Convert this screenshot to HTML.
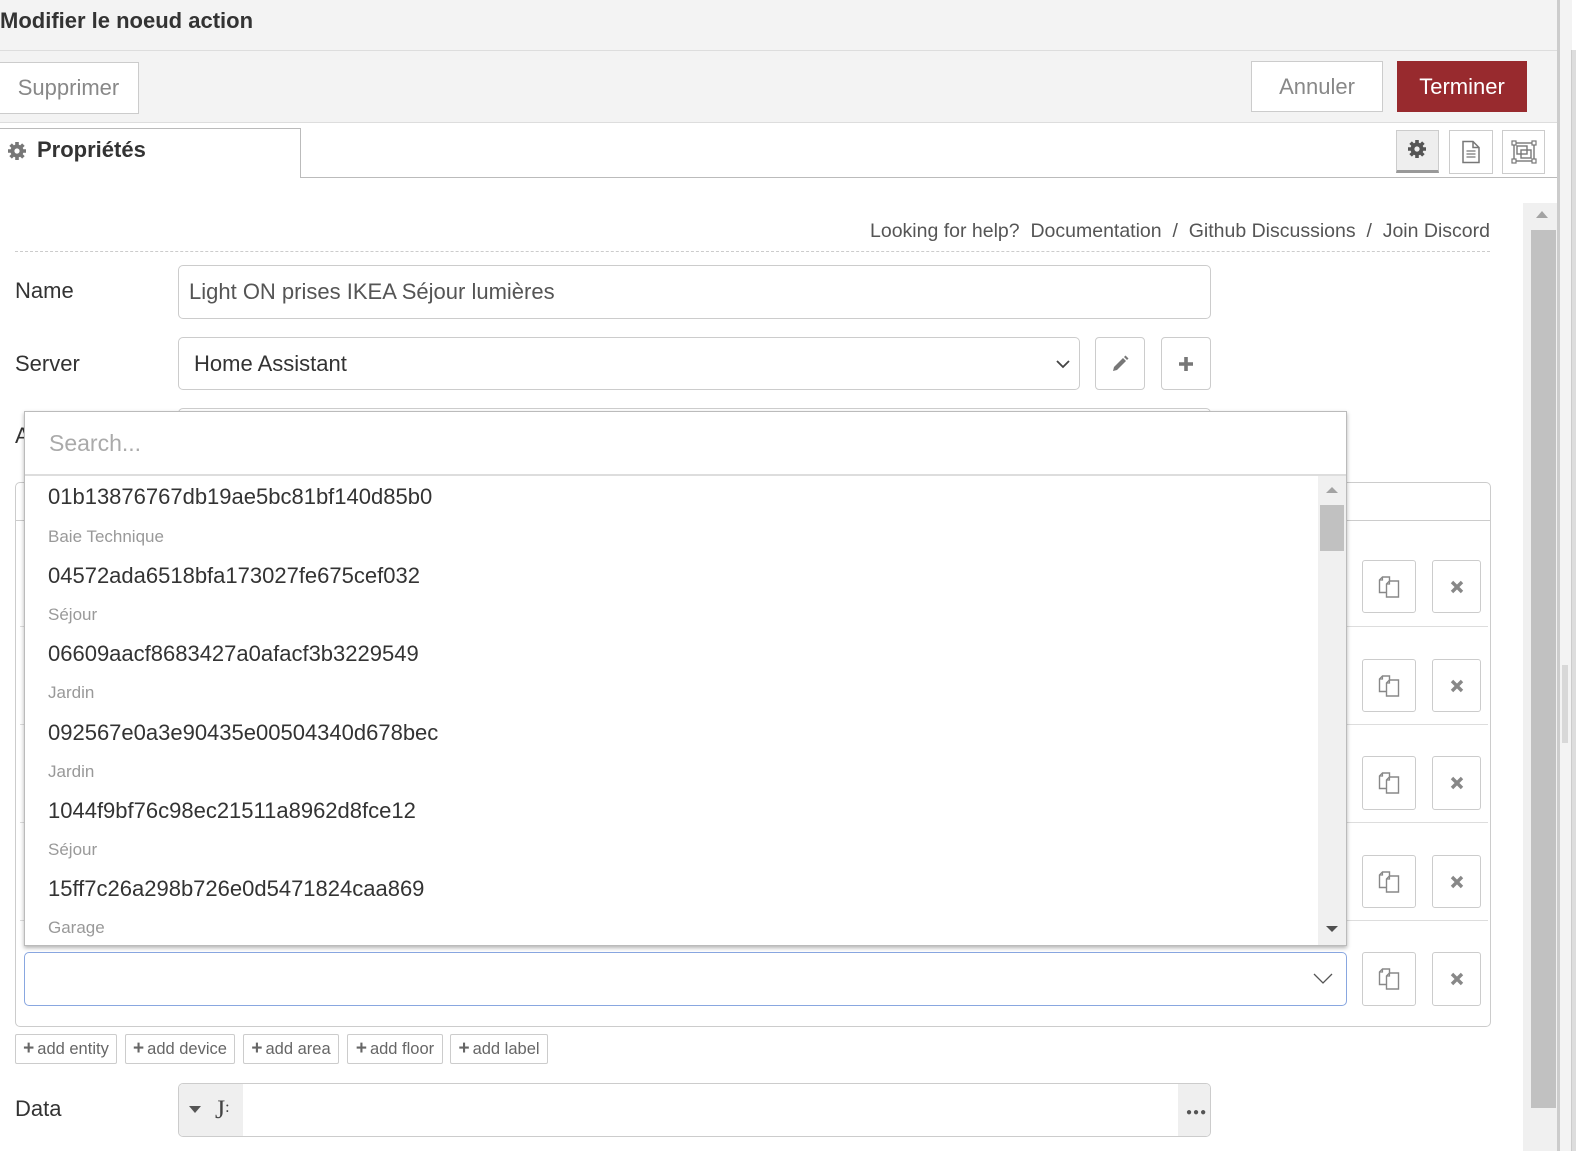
<!DOCTYPE html>
<html style="overflow:hidden;width:1576px;height:1151px"><head><meta charset="utf-8"><style>
*{box-sizing:border-box;margin:0;padding:0}
html,body{overflow:hidden}
body{width:1576px;height:1151px;background:#fff;font-family:"Liberation Sans",sans-serif;color:#333;position:relative}
#w{position:absolute;left:0;top:0;width:1576px;height:1151px;overflow:hidden}
.a{position:absolute;white-space:nowrap}
.btn{position:absolute;background:#fff;border:1px solid #ccc;border-radius:3px;display:flex;align-items:center;justify-content:center;white-space:nowrap}
.inp{position:absolute;border:1px solid #ccc;border-radius:5px;background:#fff}
.lbl{position:absolute;font-size:22px;color:#333}
.id{position:absolute;left:48px;font-size:22px;color:#333}
.sub{position:absolute;left:48px;font-size:17px;color:#999}
.add{position:absolute;top:1034px;height:30px;border:1px solid #ccc;border-radius:2px;font-size:16.5px;color:#666;display:flex;align-items:center;justify-content:center;background:#fff;white-space:nowrap}
.add b{font-size:19px;color:#666;margin-right:3px;font-weight:bold}
</style></head><body><div id="w">
<div class="a" style="left:0;top:0;width:1558px;height:123px;background:#f3f3f3;border-bottom:1px solid #ddd"></div>
<div class="a" style="left:0;top:50px;width:1558px;height:1px;background:#ddd"></div>
<div class="a" style="left:0;top:8px;font-size:22px;font-weight:bold;color:#333">Modifier le noeud action</div>
<div class="btn" style="left:-2px;top:62px;width:141px;height:52px;border-radius:0;font-size:22px;color:#888">Supprimer</div>
<div class="btn" style="left:1251px;top:61px;width:132px;height:51px;border-radius:0;font-size:22px;color:#888">Annuler</div>
<div class="btn" style="left:1397px;top:61px;width:130px;height:51px;border-radius:0;background:#982a2e;border-color:#982a2e;font-size:22px;color:#fff">Terminer</div>
<div class="a" style="left:1557px;top:0;width:3px;height:1151px;background:#ccc"></div>
<div class="a" style="left:1560px;top:0;width:12px;height:1151px;background:#f3f3f3"></div>
<div class="a" style="left:1571px;top:50px;width:1px;height:1101px;background:#ccc"></div>
<div class="a" style="left:1572px;top:50px;width:4px;height:1101px;background:#ddd"></div>
<div class="a" style="left:1562px;top:665px;width:6px;height:78px;background:#d8d8d8"></div>
<div class="a" style="left:0;top:177px;width:1557px;height:1px;background:#bbb"></div>
<div class="a" style="left:-1px;top:128px;width:302px;height:50px;background:#fff;border:1px solid #bbb;border-bottom:none"></div>
<svg class="a" style="left:7px;top:141px" width="20" height="20" viewBox="0 0 20 20"><g fill="#777"><circle cx="10" cy="10" r="6.5"/><g stroke="#777" stroke-width="3.6"><line x1="10" y1="1" x2="10" y2="19"/><line x1="1" y1="10" x2="19" y2="10"/><line x1="3.6" y1="3.6" x2="16.4" y2="16.4"/><line x1="16.4" y1="3.6" x2="3.6" y2="16.4"/></g></g><circle cx="10" cy="10" r="2.6" fill="#fff"/></svg>
<div class="a" style="left:37px;top:137px;font-size:22px;font-weight:bold;color:#333">Propriétés</div>
<div class="a" style="left:1396px;top:130px;width:43px;height:43px;background:#eee;border:1px solid #ccc;border-bottom:3px solid #999"></div>
<svg class="a" style="left:1407px;top:139px" width="20" height="20" viewBox="0 0 20 20"><g fill="#555"><circle cx="10" cy="10" r="6.5"/><g stroke="#555" stroke-width="3.6"><line x1="10" y1="1" x2="10" y2="19"/><line x1="1" y1="10" x2="19" y2="10"/><line x1="3.6" y1="3.6" x2="16.4" y2="16.4"/><line x1="16.4" y1="3.6" x2="3.6" y2="16.4"/></g></g><circle cx="10" cy="10" r="2.6" fill="#eee"/></svg>
<div class="btn" style="left:1449px;top:130px;width:44px;height:44px;border-radius:0"><svg width="22" height="24" viewBox="0 0 22 24"><path d="M3 1.5h10l6 6v15H3z M13 1.5v6h6" fill="none" stroke="#777" stroke-width="1.5"/><path d="M6.5 11h9M6.5 14h9M6.5 17h9" stroke="#777" stroke-width="1.3"/></svg></div>
<div class="btn" style="left:1502px;top:130px;width:43px;height:44px;border-radius:0"><svg width="26" height="24" viewBox="0 0 26 24"><rect x="3" y="3" width="20" height="18" fill="none" stroke="#777" stroke-width="1.4"/><rect x="6" y="6" width="10" height="8" fill="none" stroke="#777" stroke-width="1.4"/><rect x="10" y="10" width="10" height="8" fill="none" stroke="#777" stroke-width="1.4"/><g fill="#fff" stroke="#777" stroke-width="1.2"><rect x="1" y="1" width="4" height="4"/><rect x="21" y="1" width="4" height="4"/><rect x="1" y="19" width="4" height="4"/><rect x="21" y="19" width="4" height="4"/></g></svg></div>
<div class="a" style="left:1523px;top:203px;width:34px;height:948px;background:#f0f0f0"></div>
<div class="a" style="left:1531px;top:230px;width:25px;height:878px;background:#c1c1c1"></div>
<div class="a" style="left:1536px;top:211px;width:0;height:0;border-left:6px solid transparent;border-right:6px solid transparent;border-bottom:7px solid #a3a3a3"></div>
<div class="a" style="right:86px;top:220px;font-size:19.5px;color:#555">Looking for help?&nbsp; Documentation&nbsp; /&nbsp; Github Discussions&nbsp; /&nbsp; Join Discord</div>
<div class="a" style="left:15px;top:251px;width:1475px;border-top:1px dashed #ccc"></div>
<div class="lbl" style="left:15px;top:278px">Name</div>
<div class="inp" style="left:178px;top:265px;width:1033px;height:54px"><span class="a" style="left:10px;top:13px;font-size:22px;color:#555">Light ON prises IKEA Séjour lumières</span></div>
<div class="lbl" style="left:15px;top:351px">Server</div>
<div class="inp" style="left:178px;top:337px;width:902px;height:53px"><span class="a" style="left:15px;top:13px;font-size:22px;color:#333">Home Assistant</span><svg class="a" style="left:876px;top:20px" width="16" height="12" viewBox="0 0 16 12"><path d="M2 3l6 6 6-6" fill="none" stroke="#444" stroke-width="1.8"/></svg></div>
<div class="btn" style="left:1095px;top:337px;width:50px;height:53px;border-radius:4px"><svg width="20" height="20" viewBox="0 0 20 20"><path d="M3 17l1-4 9-9 3 3-9 9z" fill="#777"/><path d="M14 3l1.5-1.5 3 3L17 6z" fill="#777"/></svg></div>
<div class="btn" style="left:1161px;top:337px;width:50px;height:53px;border-radius:4px"><svg width="18" height="18" viewBox="0 0 18 18"><path d="M9 2v14M2 9h14" stroke="#777" stroke-width="3.6"/></svg></div>
<div class="lbl" style="left:15px;top:423px">A</div>
<div class="inp" style="left:178px;top:408px;width:1033px;height:54px"></div>
<div class="a" style="left:15px;top:482px;width:1476px;height:545px;border:1px solid #ccc;border-radius:5px;background:#fff"></div>
<div class="a" style="left:16px;top:520px;width:1474px;height:1px;background:#ccc"></div>
<div class="a" style="left:20px;top:626px;width:1468px;height:1px;background:#ddd"></div>
<div class="a" style="left:20px;top:724px;width:1468px;height:1px;background:#ddd"></div>
<div class="a" style="left:20px;top:822px;width:1468px;height:1px;background:#ddd"></div>
<div class="a" style="left:20px;top:920px;width:1468px;height:1px;background:#ddd"></div>
<div class="btn" style="left:1362px;top:560px;width:54px;height:53px"><svg width="22" height="22" viewBox="0 0 22 22"><path d="M1.5 4L4.5 1H11.5V16.5H1.5z" fill="#fff" stroke="#888" stroke-width="1.4"/><path d="M1.5 4H4.5V1" fill="none" stroke="#888" stroke-width="1.2"/><path d="M8.5 8L11.5 5H20.5V21H8.5z" fill="#fff" stroke="#888" stroke-width="1.4"/><path d="M8.5 8H11.5V5" fill="none" stroke="#888" stroke-width="1.2"/></svg></div>
<div class="btn" style="left:1432px;top:560px;width:49px;height:53px"><svg width="14" height="14" viewBox="0 0 14 14"><path d="M2 2l10 10M12 2L2 12" stroke="#888" stroke-width="3.4"/></svg></div>
<div class="btn" style="left:1362px;top:659px;width:54px;height:53px"><svg width="22" height="22" viewBox="0 0 22 22"><path d="M1.5 4L4.5 1H11.5V16.5H1.5z" fill="#fff" stroke="#888" stroke-width="1.4"/><path d="M1.5 4H4.5V1" fill="none" stroke="#888" stroke-width="1.2"/><path d="M8.5 8L11.5 5H20.5V21H8.5z" fill="#fff" stroke="#888" stroke-width="1.4"/><path d="M8.5 8H11.5V5" fill="none" stroke="#888" stroke-width="1.2"/></svg></div>
<div class="btn" style="left:1432px;top:659px;width:49px;height:53px"><svg width="14" height="14" viewBox="0 0 14 14"><path d="M2 2l10 10M12 2L2 12" stroke="#888" stroke-width="3.4"/></svg></div>
<div class="btn" style="left:1362px;top:756px;width:54px;height:54px"><svg width="22" height="22" viewBox="0 0 22 22"><path d="M1.5 4L4.5 1H11.5V16.5H1.5z" fill="#fff" stroke="#888" stroke-width="1.4"/><path d="M1.5 4H4.5V1" fill="none" stroke="#888" stroke-width="1.2"/><path d="M8.5 8L11.5 5H20.5V21H8.5z" fill="#fff" stroke="#888" stroke-width="1.4"/><path d="M8.5 8H11.5V5" fill="none" stroke="#888" stroke-width="1.2"/></svg></div>
<div class="btn" style="left:1432px;top:756px;width:49px;height:54px"><svg width="14" height="14" viewBox="0 0 14 14"><path d="M2 2l10 10M12 2L2 12" stroke="#888" stroke-width="3.4"/></svg></div>
<div class="btn" style="left:1362px;top:855px;width:54px;height:53px"><svg width="22" height="22" viewBox="0 0 22 22"><path d="M1.5 4L4.5 1H11.5V16.5H1.5z" fill="#fff" stroke="#888" stroke-width="1.4"/><path d="M1.5 4H4.5V1" fill="none" stroke="#888" stroke-width="1.2"/><path d="M8.5 8L11.5 5H20.5V21H8.5z" fill="#fff" stroke="#888" stroke-width="1.4"/><path d="M8.5 8H11.5V5" fill="none" stroke="#888" stroke-width="1.2"/></svg></div>
<div class="btn" style="left:1432px;top:855px;width:49px;height:53px"><svg width="14" height="14" viewBox="0 0 14 14"><path d="M2 2l10 10M12 2L2 12" stroke="#888" stroke-width="3.4"/></svg></div>
<div class="btn" style="left:1362px;top:952px;width:54px;height:54px"><svg width="22" height="22" viewBox="0 0 22 22"><path d="M1.5 4L4.5 1H11.5V16.5H1.5z" fill="#fff" stroke="#888" stroke-width="1.4"/><path d="M1.5 4H4.5V1" fill="none" stroke="#888" stroke-width="1.2"/><path d="M8.5 8L11.5 5H20.5V21H8.5z" fill="#fff" stroke="#888" stroke-width="1.4"/><path d="M8.5 8H11.5V5" fill="none" stroke="#888" stroke-width="1.2"/></svg></div>
<div class="btn" style="left:1432px;top:952px;width:49px;height:54px"><svg width="14" height="14" viewBox="0 0 14 14"><path d="M2 2l10 10M12 2L2 12" stroke="#888" stroke-width="3.4"/></svg></div>
<div class="a" style="left:24px;top:952px;width:1323px;height:54px;border:1px solid #89a7e0;border-radius:5px;background:#fff"><svg class="a" style="left:1288px;top:18px" width="20" height="14" viewBox="0 0 20 14"><path d="M1 3l9 9 9-9" fill="none" stroke="#555" stroke-width="1.3"/></svg></div>
<div class="a" style="left:24px;top:411px;width:1323px;height:535px;background:#fff;border:1px solid #bbb;box-shadow:0 2px 4px rgba(0,0,0,.3)">
 <div class="a" style="left:0;top:62px;width:1321px;height:2px;background:#ddd"></div>
 <div class="a" style="left:24px;top:18px;font-size:23px;color:#aaa">Search...</div>
 <div class="a" style="left:1293px;top:64px;width:28px;height:469px;background:#f0f0f0"></div>
 <div class="a" style="left:1295px;top:93px;width:24px;height:46px;background:#c1c1c1"></div>
 <div class="a" style="left:1301px;top:75px;width:0;height:0;border-left:6px solid transparent;border-right:6px solid transparent;border-bottom:6px solid #a3a3a3"></div>
 <div class="a" style="left:1301px;top:514px;width:0;height:0;border-left:6px solid transparent;border-right:6px solid transparent;border-top:6px solid #505050"></div>
</div>
<div class="id" style="top:484px">01b13876767db19ae5bc81bf140d85b0</div>
<div class="sub" style="top:527px">Baie Technique</div>
<div class="id" style="top:563px">04572ada6518bfa173027fe675cef032</div>
<div class="sub" style="top:605px">Séjour</div>
<div class="id" style="top:641px">06609aacf8683427a0afacf3b3229549</div>
<div class="sub" style="top:683px">Jardin</div>
<div class="id" style="top:720px">092567e0a3e90435e00504340d678bec</div>
<div class="sub" style="top:762px">Jardin</div>
<div class="id" style="top:798px">1044f9bf76c98ec21511a8962d8fce12</div>
<div class="sub" style="top:840px">Séjour</div>
<div class="id" style="top:876px">15ff7c26a298b726e0d5471824caa869</div>
<div class="sub" style="top:918px">Garage</div>
<div class="add" style="left:15px;width:102px"><b>+</b>add entity</div>
<div class="add" style="left:125px;width:110px"><b>+</b>add device</div>
<div class="add" style="left:243px;width:96px"><b>+</b>add area</div>
<div class="add" style="left:347px;width:96px"><b>+</b>add floor</div>
<div class="add" style="left:450px;width:98px"><b>+</b>add label</div>
<div class="lbl" style="left:15px;top:1096px">Data</div>
<div class="inp" style="left:178px;top:1083px;width:1033px;height:54px;overflow:hidden">
 <div class="a" style="left:0;top:0;width:64px;height:54px;background:#efefef"></div>
 <div class="a" style="left:10px;top:22px;width:0;height:0;border-left:6px solid transparent;border-right:6px solid transparent;border-top:7px solid #555"></div>
 <div class="a" style="left:36px;top:11px;font-family:'Liberation Serif',serif;font-size:26px;color:#444">J<span style="font-size:16px;position:relative;top:-6px">:</span></div>
 <div class="a" style="left:999px;top:0;width:34px;height:54px;background:#efefef"></div>
 <div class="a" style="left:1007px;top:23px;font-size:10px;color:#555;letter-spacing:1px">●●●</div>
</div>
</div></body></html>
